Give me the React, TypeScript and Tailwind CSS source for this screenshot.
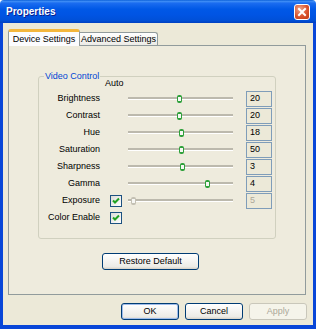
import React from "react";

type Row = { label: string; pos: number; value: string; check?: boolean; disabled?: boolean; slider?: boolean };

const rows: Row[] = [
  { label: "Brightness", pos: 49, value: "20", slider: true },
  { label: "Contrast", pos: 49, value: "20", slider: true },
  { label: "Hue", pos: 51, value: "18", slider: true },
  { label: "Saturation", pos: 51, value: "50", slider: true },
  { label: "Sharpness", pos: 52, value: "3", slider: true },
  { label: "Gamma", pos: 77, value: "4", slider: true },
  { label: "Exposure", pos: 3, value: "5", check: true, disabled: true, slider: true },
  { label: "Color Enable", pos: 0, value: "", check: true, slider: false },
];

function Check() {
  return (
    <div className="w-[12px] h-[12px] border border-[#1c5180] bg-[linear-gradient(135deg,#dcdcd7,#ffffff)] flex items-center justify-center">
      <svg width="8" height="8" viewBox="0 0 8 8">
        <path d="M1 3.5 L3 5.5 L7 1.5" stroke="#21a121" strokeWidth="2" fill="none" />
      </svg>
    </div>
  );
}

function Slider({ pos, disabled }: { pos: number; disabled?: boolean }) {
  return (
    <div className="relative w-[105px] h-[10px] flex items-center">
      <div className="w-full h-[3px] border-t-2 border-[#bcb9ad] bg-white" />
      <div
        className={
          "absolute top-[1px] w-[5px] h-[8px] rounded-[2px] border-x border-y-2 bg-[#f7f7f4] " +
          (disabled ? "border-[#c3c0b3]" : "border-[#2ea03a]")
        }
        style={{ left: pos }}
      />
    </div>
  );
}

function Btn({ children, w, primary, disabled }: { children: React.ReactNode; w: string; primary?: boolean; disabled?: boolean }) {
  return (
    <div
      className={
        "h-[17px] rounded-[3px] border flex items-center justify-center " +
        w +
        " " +
        (disabled
          ? "border-[#c9c7ba] bg-[#f5f4ea] text-[#aca899]"
          : primary
          ? "border-[#003c74] bg-[linear-gradient(#ffffff,#ecebe6_85%,#d6d0c5)] shadow-[inset_0_0_0_1px_#9fbcea] text-black"
          : "border-[#003c74] bg-[linear-gradient(#ffffff,#ecebe6_85%,#d6d0c5)] text-black")
      }
    >
      {children}
    </div>
  );
}

export default function App() {
  return (
    <div
      className="w-[316px] h-[329px] flex flex-col text-[9px] leading-none text-black"
      style={{ fontFamily: '"Liberation Sans", Arial, sans-serif' }}
    >
      {/* Title bar */}
      <div className="h-[23px] shrink-0 flex items-center justify-between pl-[6px] pr-[6px] bg-[linear-gradient(to_bottom,#0a5fd8_0%,#3d8cf5_6%,#1a6cf0_14%,#0058e6_40%,#0054e3_65%,#0050d8_88%,#0040c0_100%)] rounded-t-[4px]">
        <span className="text-white font-bold text-[10px] [text-shadow:1px_1px_0_#0a1e8c]">Properties</span>
        <div className="w-[16px] h-[16px] mt-[1px] rounded-[3px] border border-white bg-[radial-gradient(circle_at_35%_30%,#f0a488,#d9532e_55%,#c23a12)] flex items-center justify-center">
          <svg width="10" height="10" viewBox="0 0 10 10">
            <path d="M2 2 L8 8 M8 2 L2 8" stroke="white" strokeWidth="2" strokeLinecap="square" />
          </svg>
        </div>
      </div>

      {/* Body */}
      <div className="flex-1 flex flex-col bg-[#ece9d8] border-x-[3px] border-b-[4px] border-[#0846d8]">
        {/* Tabs */}
        <div className="flex items-end ml-[5px] mt-[6px] h-[16px]">
          <div className="relative z-10 h-[17px] w-[72px] -mb-[1px] bg-[#fcfcfe] border-x border-[#919b9c] border-t-[3px] border-t-[#f4b73d] rounded-t-[3px] flex items-center justify-center">
            Device Settings
          </div>
          <div className="h-[13px] w-[78px] bg-[linear-gradient(#ffffff,#ecebe6)] border-t border-r border-[#919b9c] rounded-tr-[3px] flex items-center justify-center">
            Advanced Settings
          </div>
        </div>

        {/* Panel */}
        <div className="ml-[5px] mr-[7px] h-[250px] border border-[#919b9c] bg-[#eeebdd] pl-[29px] pt-[30px] flex flex-col">
          <div className="relative w-[238px] h-[163px] rounded-[3px] border border-[#d0d0bf]">
            <span className="absolute -top-[5px] left-[5px] px-[1px] bg-[#eeebdd] text-[#0046d5]">Video Control</span>
            <div className="h-[13px] flex items-center pl-[66px]">Auto</div>
            {rows.map((r) => (
              <div key={r.label} className="h-[17px] flex items-center">
                <div className="w-[61px] text-right">{r.label}</div>
                <div className="w-[12px] ml-[10px]">{r.check ? <Check /> : null}</div>
                <div className="ml-[6px] w-[105px]">{r.slider ? <Slider pos={r.pos} disabled={r.disabled} /> : null}</div>
                {r.value !== "" ? (
                  <div
                    className={
                      "ml-[13px] w-[26px] h-[16px] border border-[#7f9db9] bg-[#ece9d8] flex items-center pl-[3px] " +
                      (r.disabled ? "text-[#aca899]" : "")
                    }
                  >
                    {r.value}
                  </div>
                ) : null}
              </div>
            ))}
          </div>
          <div className="mt-[14px] ml-[64px]">
            <Btn w="w-[97px]">Restore Default</Btn>
          </div>
        </div>

        {/* Bottom buttons */}
        <div className="flex justify-end gap-[6px] mt-[8px] mr-[6px]">
          <Btn w="w-[58px]" primary>
            OK
          </Btn>
          <Btn w="w-[58px]">Cancel</Btn>
          <Btn w="w-[58px]" disabled>
            Apply
          </Btn>
        </div>
      </div>
    </div>
  );
}
